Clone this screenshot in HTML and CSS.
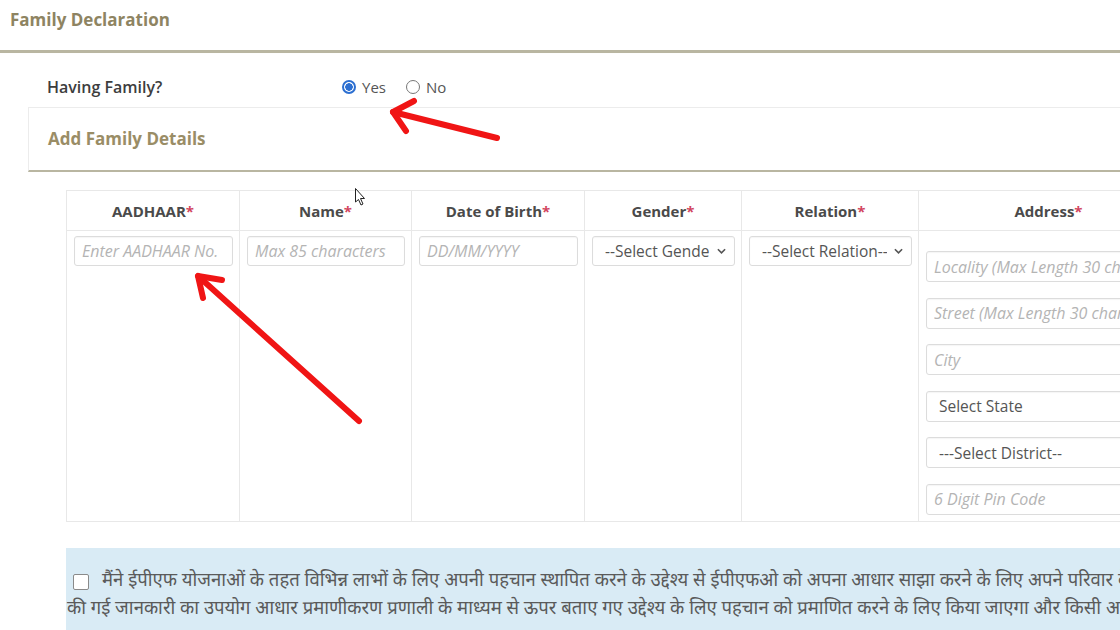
FILE: index.html
```html
<!DOCTYPE html>
<html lang="en">
<head>
<meta charset="utf-8">
<title>Family Declaration</title>
<link rel="stylesheet" href="styles.css">
</head>
<body>
<div class="page">
  <div class="section-head">
    <h2 class="section-title">Family Declaration</h2>
  </div>
  <div class="section-body">
    <div class="having-row">
      <span class="having-label">Having Family?</span>
      <label class="radio"><span class="radio-dot checked"></span>Yes</label>
      <label class="radio"><span class="radio-dot"></span>No</label>
    </div>
    <div class="card">
      <div class="card-head">
        <h3 class="card-title">Add Family Details</h3>
      </div>
      <div class="card-body">
        <table class="family-table">
          <colgroup>
            <col class="c-aadhaar"><col class="c-name"><col class="c-dob"><col class="c-gender"><col class="c-relation"><col class="c-address">
          </colgroup>
          <thead>
            <tr>
              <th>AADHAAR<span class="req">*</span></th>
              <th>Name<span class="req">*</span></th>
              <th>Date of Birth<span class="req">*</span></th>
              <th>Gender<span class="req">*</span></th>
              <th>Relation<span class="req">*</span></th>
              <th>Address<span class="req">*</span></th>
            </tr>
          </thead>
          <tbody>
            <tr>
              <td><input class="field" type="text" placeholder="Enter AADHAAR No."></td>
              <td><input class="field" type="text" placeholder="Max 85 characters"></td>
              <td><input class="field" type="text" placeholder="DD/MM/YYYY"></td>
              <td>
                <div class="select-wrap">
                  <select class="field select"><option>--Select Gender--</option></select>
                  <svg class="chev" viewBox="0 0 10 6" width="9" height="6"><path d="M1 1 L5 5 L9 1" fill="none" stroke="#555" stroke-width="1.8"/></svg>
                </div>
              </td>
              <td>
                <div class="select-wrap">
                  <select class="field select"><option>--Select Relation--</option></select>
                  <svg class="chev" viewBox="0 0 10 6" width="9" height="6"><path d="M1 1 L5 5 L9 1" fill="none" stroke="#555" stroke-width="1.8"/></svg>
                </div>
              </td>
              <td class="address-cell">
                <div class="address-stack">
                  <input class="field" type="text" placeholder="Locality (Max Length 30 characters)">
                  <input class="field" type="text" placeholder="Street (Max Length 30 characters)">
                  <input class="field" type="text" placeholder="City">
                  <select class="field select plain"><option>Select State</option></select>
                  <select class="field select plain"><option>---Select District--</option></select>
                  <input class="field" type="text" placeholder="6 Digit Pin Code">
                </div>
              </td>
            </tr>
          </tbody>
        </table>

        <div class="consent">
          <div class="consent-line"><span class="checkbox"></span>मैंने ईपीएफ योजनाओं के तहत विभिन्न लाभों के लिए अपनी पहचान स्थापित करने के उद्देश्य से ईपीएफओ को अपना आधार साझा करने के लिए अपने परिवार के सदस्यों की सहमति प्राप्त कर ली है। मुझे बताया गया है कि साझा</div>
          <div class="consent-line">की गई जानकारी का उपयोग आधार प्रमाणीकरण प्रणाली के माध्यम से ऊपर बताए गए उद्देश्य के लिए पहचान को प्रमाणित करने के लिए किया जाएगा और किसी अन्य उद्देश्य के लिए नहीं।</div>
        </div>
      </div>
    </div>
  </div>

  <svg class="annotations" width="1120" height="630" viewBox="0 0 1120 630">
    <g stroke="#f01515" stroke-width="6" stroke-linecap="round" stroke-linejoin="round" fill="none">
      <path d="M497 138 L393 112"/>
      <path d="M414 101 L393 112 L406 131"/>
      <path d="M359 421 L198 276"/>
      <path d="M222 280 L198 276 L203 298"/>
    </g>
    <path d="M355.5 188.5 L355.5 202 L358.5 199.5 L361 205 L363 204 L360.5 198.5 L364.5 198.5 Z" fill="#fff" stroke="#222" stroke-width="1"/>
  </svg>
</div>
</body>
</html>
```

FILE: styles.css
```css
html, body {
  margin: 0;
  padding: 0;
  background: #ffffff;
  overflow: hidden;
}

body {
  font-family: "Open Sans", "Noto Sans", sans-serif;
  color: #333;
}

.page {
  position: relative;
  width: 1120px;
  height: 630px;
  overflow: hidden;
}

.section-head {
  height: 50px;
  padding: 0 0 0 10px;
  border-bottom: 3px solid #b9b6a1;
  box-shadow: 0 -2px 3px rgba(230, 226, 190, 0.5);
  box-sizing: content-box;
}

.section-title {
  margin: 0;
  padding-top: 9px;
  font-size: 17px;
  line-height: 22px;
  font-weight: 700;
  color: #8e8462;
}

.section-body {
  padding-left: 28px;
}

.having-row {
  display: flex;
  align-items: center;
  height: 54px;
  padding: 23px 0 9px 19px;
  box-sizing: border-box;
  font-size: 15px;
  line-height: 22px;
}

.having-label {
  width: 295px;
  font-size: 16px;
  font-weight: 600;
  color: #3d3d3d;
}

.radio {
  display: flex;
  align-items: center;
  gap: 6px;
  margin-right: 20px;
  font-size: 15px;
  color: #555;
}

.radio-dot {
  width: 14px;
  height: 14px;
  border: 1px solid #777;
  border-radius: 50%;
  box-sizing: border-box;
  background: #fff;
}

.radio-dot.checked {
  border: 2px solid #2c6fd1;
  background: radial-gradient(circle, #2c6fd1 0 3.5px, #fff 4px);
}

.card {
  width: 1300px;
}

.card-head {
  height: 62px;
  border-top: 1px solid #ececec;
  border-left: 1px solid #ececec;
  border-bottom: 2px solid #b9b6a1;
  padding-left: 19px;
  display: flex;
  align-items: center;
  box-sizing: content-box;
}

.card-title {
  margin: 0;
  font-size: 17px;
  line-height: 22px;
  font-weight: 700;
  color: #9a8d66;
}

.card-body {
  padding: 18px 0 0 38px;
}

.family-table {
  border-collapse: collapse;
  table-layout: fixed;
  width: 1112px;
}

.c-aadhaar { width: 173px; }
.c-name { width: 172px; }
.c-dob { width: 173px; }
.c-gender { width: 157px; }
.c-relation { width: 177px; }
.c-address { width: 260px; }

.family-table th,
.family-table td {
  border: 1px solid #e8e8e8;
}

.family-table th {
  height: 39px;
  padding: 0;
  font-size: 15px;
  font-weight: 700;
  color: #4a4a4a;
  text-align: center;
  vertical-align: middle;
}

.req {
  color: #d2455e;
}

.family-table td {
  padding: 5px 6px 6px 7px;
  vertical-align: top;
}

.field {
  display: block;
  width: 100%;
  height: 30px;
  box-sizing: border-box;
  border: 1px solid #dcdcdc;
  border-radius: 3px;
  padding: 0 7px;
  font-family: "Open Sans", "Noto Sans", sans-serif;
  font-size: 15.5px;
  color: #555;
  background: #fff;
  outline: none;
  box-shadow: inset 0 1px 1px rgba(0, 0, 0, 0.04);
}

.field::placeholder {
  color: #b4b4b4;
  font-style: italic;
  font-size: 16px;
}

.select {
  appearance: none;
  -webkit-appearance: none;
  padding: 0 24px 0 12px;
  color: #555;
  font-style: normal;
}

.select.plain {
  padding-left: 12px;
}

.select-wrap {
  position: relative;
}

.chev {
  position: absolute;
  right: 9px;
  top: 12px;
  pointer-events: none;
}

.family-table td.address-cell {
  padding: 20px 0 6px 7px;
}

.address-stack {
  display: flex;
  flex-direction: column;
  gap: 15.5px;
  width: 240px;
}

.address-stack .field {
  height: 31px;
}

.consent {
  margin-top: 26px;
  width: 1250px;
  background: #d9ebf5;
  padding: 20px 0 8px 1px;
  font-family: "Noto Sans Devanagari", "Noto Sans", "Lohit Devanagari", sans-serif;
  font-size: 18.5px;
  word-spacing: 0;
  line-height: 28px;
  color: #5a5a5a;
}

.consent-line {
  white-space: nowrap;
  display: flex;
  align-items: center;
}

.checkbox {
  display: inline-block;
  width: 14px;
  height: 14px;
  border: 1.5px solid #8a8a8a;
  border-radius: 2px;
  background: #fff;
  margin: 0 13px 0 6px;
  flex: none;
}

.annotations {
  position: absolute;
  left: 0;
  top: 0;
  pointer-events: none;
}
```
